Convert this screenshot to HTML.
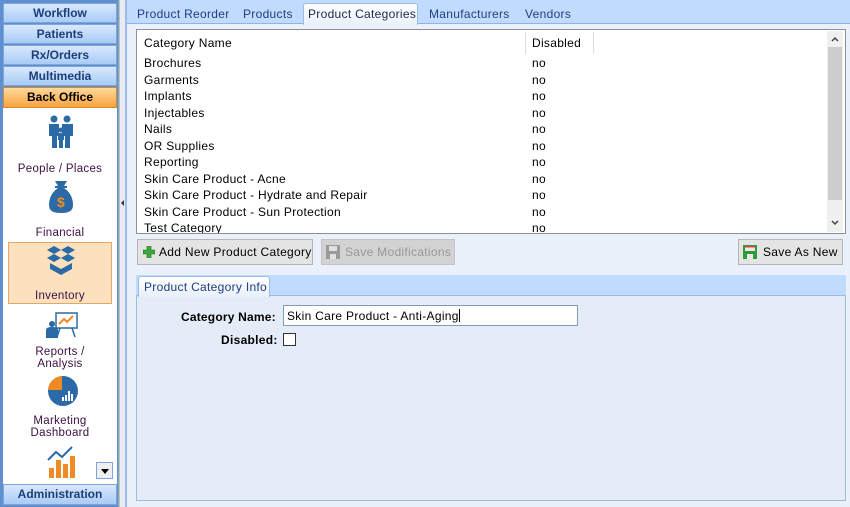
<!DOCTYPE html>
<html><head><meta charset="utf-8"><style>
*{box-sizing:border-box;margin:0;padding:0}
body{width:850px;height:507px;overflow:hidden;background:#cfe0f7;font-family:"Liberation Sans",sans-serif;font-size:12px;letter-spacing:0.3px;color:#000;position:relative;white-space:nowrap}
.abs{position:absolute}
#side{left:0;top:0;width:119px;height:507px;background:#5f8fcf;border-right:1px solid #8aa}
.nb{position:absolute;left:3px;width:114px;height:20px;background:linear-gradient(#d9e8fd,#a9cbf6);border:1px solid #7ea6dc;color:#1c3f7a;font-weight:bold;font-size:12px;text-align:center;line-height:18px;letter-spacing:0}
.nb.on{background:linear-gradient(#ffd99a,#f9a340);color:#000;border-color:#d58a2c}
#items{left:3px;top:108px;width:114px;height:376px;background:#fff}
.it{position:absolute;left:0;width:114px;text-align:center;font-size:11.5px;color:#3a1040;line-height:12px}
#split{left:119px;top:0;width:8px;height:507px;background:#e8ecf2;border-left:1px solid #b8c2cf;border-right:2px solid #9ebbe6}
#main{left:127px;top:0;width:723px;height:507px;background:#eaf1fb}
#tabs{left:127px;top:0;width:723px;height:24px;background:#c0dbfd;border-bottom:1px solid #8fb3e4}
.tab{position:absolute;top:7px;font-size:12px;color:#1f3f7f}
.grid{left:136px;top:29px;width:710px;height:205px;background:#fff;border:1px solid #8a8f96}
.row{position:absolute;left:7px;font-size:12px}
.btn{position:absolute;top:239px;height:26px;border:1px solid #b5b5b5;background:#e4e4e4;font-size:12px;line-height:24px}
</style></head><body>
<div id="side" class="abs">
<div class="nb" style="top:3px">Workflow</div>
<div class="nb" style="top:24px">Patients</div>
<div class="nb" style="top:45px">Rx/Orders</div>
<div class="nb" style="top:66px">Multimedia</div>
<div class="nb on" style="top:87px;height:21px">Back Office</div>
<div id="items" class="abs">
 <svg class="abs" style="left:45px;top:7px" width="26" height="34" viewBox="0 0 26 34"><g fill="#2b6aa6"><circle cx="6" cy="4" r="3.5"/><circle cx="19" cy="4" r="3.5"/><circle cx="13" cy="15" r="2.5"/><path d="M1 9h10v12H9v12H4V21H1z"/><path d="M14 9h11v12h-3v12h-5V21h-3z"/><path d="M10 18h6v7h-1v8h-4v-8h-1z"/></g></svg>
 <div class="it" style="top:55px">People / Places</div>
 <svg class="abs" style="left:45px;top:72px" width="26" height="34" viewBox="0 0 26 34"><path fill="#2b6aa6" d="M7 1h12l-3 5h3v2h-3c6 4 9 10 9 17 0 6-4 8-12 8S1 31 1 25c0-7 3-13 9-17H7V6h3z"/><text x="13" y="27" font-size="14" font-weight="bold" fill="#f08a24" text-anchor="middle" font-family="Liberation Sans">$</text></svg>
 <div class="it" style="top:119px">Financial</div>
 <div class="abs" style="left:5px;top:134px;width:104px;height:62px;background:#fde0bd;border:1px solid #e3a868"></div>
 <svg class="abs" style="left:43px;top:137px" width="30" height="30" viewBox="0 0 30 30"><g fill="#2b6aa6"><path d="M1 5l7-4 7 4-7 4z"/><path d="M15 5l7-4 7 4-7 4z"/><path d="M1 13l7-4 7 4-7 4z"/><path d="M15 13l7-4 7 4-7 4z"/><path d="M4 18l11 6 11-6v6l-11 6-11-6z"/></g></svg>
 <div class="it" style="top:182px">Inventory</div>
 <svg class="abs" style="left:42px;top:203px" width="34" height="28" viewBox="0 0 34 28"><rect x="11" y="2" width="21" height="15" fill="none" stroke="#2b6aa6" stroke-width="1.5"/><path d="M14 13l5-5 3 3 6-6" stroke="#f08a24" stroke-width="2" fill="none"/><path d="M15 17l-3 9M27 17l3 9" stroke="#2b6aa6" stroke-width="1.5"/><circle cx="7" cy="13" r="3" fill="#2b6aa6"/><path d="M1 27v-8c0-2 2-3 6-3s6 1 6 3v8z" fill="#2b6aa6"/></svg>
 <div class="it" style="top:238px">Reports /<br>Analysis</div>
 <svg class="abs" style="left:44px;top:267px" width="32" height="32" viewBox="0 0 32 32"><circle cx="16" cy="16" r="15" fill="#2b6aa6"/><path d="M15 1A15 15 0 0 0 1 15h14z" fill="#f08a24"/><g fill="#fff"><rect x="18" y="20" width="2" height="6"/><rect x="21" y="16" width="2" height="10"/><rect x="24" y="19" width="2" height="7"/><rect x="15" y="22" width="2" height="4"/></g></svg>
 <div class="it" style="top:307px">Marketing<br>Dashboard</div>
 <svg class="abs" style="left:44px;top:338px" width="30" height="32" viewBox="0 0 30 32"><path d="M1 14l8-8 6 5 10-10" stroke="#2b6aa6" stroke-width="2" fill="none"/><g fill="#f08a24"><rect x="2" y="22" width="5" height="10"/><rect x="9" y="14" width="5" height="18"/><rect x="16" y="18" width="5" height="14"/><rect x="23" y="10" width="5" height="22"/></g></svg>
 <div class="abs" style="left:93px;top:354px;width:17px;height:17px;border:1px solid #7ea6dc;background:#f0f0f0"><div style="margin:6px 0 0 4px;width:0;height:0;border-left:4px solid transparent;border-right:4px solid transparent;border-top:5px solid #000"></div></div>
</div>
<div class="nb" style="top:484px;height:21px">Administration</div>
</div>
<div id="split" class="abs"><div style="position:absolute;left:1px;top:200px;width:0;height:0;border-top:3px solid transparent;border-bottom:3px solid transparent;border-right:3px solid #333"></div></div>
<div id="main" class="abs"></div>
<div id="tabs" class="abs">
 <div class="tab" style="left:10px">Product Reorder</div>
 <div class="tab" style="left:116px">Products</div>
 <div class="abs" style="left:176px;top:3px;width:115px;height:22px;background:linear-gradient(#fff,#eaf1fb);border:1px solid #9ebbe6;border-bottom:none;border-radius:3px 3px 0 0"></div>
 <div class="tab" style="left:181px;color:#1a2a4a">Product Categories</div>
 <div class="tab" style="left:302px">Manufacturers</div>
 <div class="tab" style="left:398px">Vendors</div>
</div>
<div class="grid abs">
 <div class="abs" style="left:388px;top:2px;width:1px;height:22px;background:#ddd"></div>
 <div class="abs" style="left:456px;top:2px;width:1px;height:22px;background:#ddd"></div>
 <div class="row" style="top:6px">Category Name</div>
 <div class="row" style="top:6px;left:395px">Disabled</div>
 <div style="position:absolute;left:0;top:26px;width:690px;height:177px;overflow:hidden">
 <div class="row" style="top:0">Brochures</div><div class="row" style="top:0;left:395px">no</div>
 <div class="row" style="top:16.5px">Garments</div><div class="row" style="top:16.5px;left:395px">no</div>
 <div class="row" style="top:33px">Implants</div><div class="row" style="top:33px;left:395px">no</div>
 <div class="row" style="top:49.5px">Injectables</div><div class="row" style="top:49.5px;left:395px">no</div>
 <div class="row" style="top:66px">Nails</div><div class="row" style="top:66px;left:395px">no</div>
 <div class="row" style="top:82.5px">OR Supplies</div><div class="row" style="top:82.5px;left:395px">no</div>
 <div class="row" style="top:99px">Reporting</div><div class="row" style="top:99px;left:395px">no</div>
 <div class="row" style="top:115.5px">Skin Care Product - Acne</div><div class="row" style="top:115.5px;left:395px">no</div>
 <div class="row" style="top:132px">Skin Care Product - Hydrate and Repair</div><div class="row" style="top:132px;left:395px">no</div>
 <div class="row" style="top:148.5px">Skin Care Product - Sun Protection</div><div class="row" style="top:148.5px;left:395px">no</div>
 <div class="row" style="top:165px">Test Category</div><div class="row" style="top:165px;left:395px">no</div>
 </div>
 <div class="abs" style="left:690px;top:1px;width:16px;height:201px;background:#f0f0f0"><div class="abs" style="left:1px;top:16px;width:14px;height:153px;background:#cdcdcd"></div><svg class="abs" style="left:4px;top:5px" width="8" height="6"><path d="M1 5l3-3 3 3" stroke="#444" stroke-width="1.5" fill="none"/></svg><svg class="abs" style="left:4px;top:189px" width="8" height="6"><path d="M1 1l3 3 3-3" stroke="#444" stroke-width="1.5" fill="none"/></svg></div>
</div>
<div class="btn" style="left:137px;width:176px"><svg style="position:absolute;left:5px;top:6px" width="12" height="12"><path d="M4 0h4v4h4v4H8v4H4V8H0V4h4z" fill="#3ca83c" stroke="#1e6e1e" stroke-width=".6"/></svg><span style="padding-left:21px">Add New Product Category</span></div>
<div class="btn" style="left:321px;width:134px;color:#999;background:#d2d2d2;border-color:#c4c4c4"><svg style="position:absolute;left:4px;top:5px" width="14" height="14"><rect width="14" height="14" fill="#9a9a9a"/><rect x="3" y="1" width="8" height="5" fill="#e0e0e0"/><rect x="4" y="9" width="6" height="5" fill="#e0e0e0"/></svg><span style="padding-left:23px">Save Modifications</span></div>
<div class="btn" style="left:738px;width:105px"><svg style="position:absolute;left:4px;top:5px" width="14" height="14"><rect width="14" height="14" fill="#2f9a3a"/><rect x="2" y="1" width="10" height="5" fill="#e8e8e8"/><rect x="2" y="1" width="10" height="1.5" fill="#e04040"/><rect x="4" y="9" width="6" height="5" fill="#e8e8e8"/></svg><span style="padding-left:24px">Save As New</span></div>
<div class="abs" style="left:136px;top:275px;width:710px;height:226px;background:#e4ecf8;border:1px solid #9ebbe6;border-top:none"></div>
<div class="abs" style="left:136px;top:275px;width:710px;height:21px;background:#c0dbfd;border-bottom:1px solid #9ebbe6"></div>
<div class="abs" style="left:138px;top:276px;width:132px;height:21px;background:linear-gradient(#fff,#e8f0fb);border:1px solid #9ebbe6;border-bottom:none;border-radius:3px 3px 0 0;color:#1f3f7f;padding:3px 0 0 5px">Product Category Info</div>
<div class="abs" style="left:181px;top:310px;font-weight:bold;letter-spacing:0.2px">Category Name:</div>
<div class="abs" style="left:283px;top:305px;width:295px;height:21px;background:#fff;border:1px solid #7f9db9;padding:3px 0 0 3px">Skin Care Product - Anti-Aging<span style="display:inline-block;width:1px;height:13px;background:#000;vertical-align:-2px"></span></div>
<div class="abs" style="left:221px;top:333px;font-weight:bold">Disabled:</div>
<div class="abs" style="left:283px;top:333px;width:13px;height:13px;background:#fff;border:1px solid #333"></div>
</body></html>
